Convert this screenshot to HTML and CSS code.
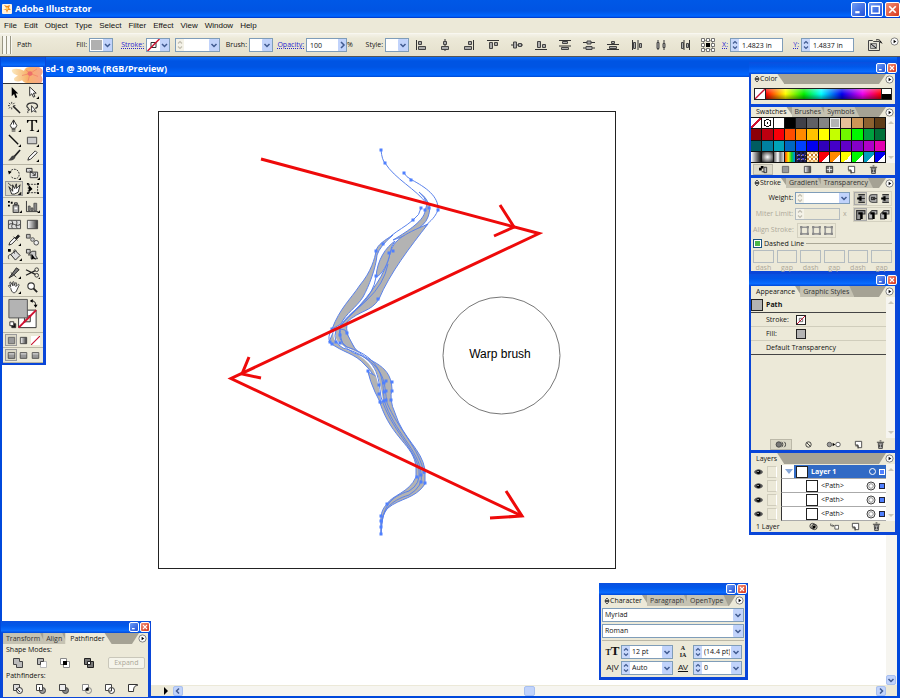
FILE: index.html
```
<!DOCTYPE html>
<html lang="en">
<head>
  <meta charset="UTF-8" />
  <meta name="viewport" content="width=device-width, initial-scale=1.0"/>
  <title>Adobe Illustrator</title>
  <link rel="stylesheet" href="styles.css">
</head>
<body>
  <!-- Icon sprites -->
  <svg class="sprites" aria-hidden="true">
    <defs>
      <linearGradient id="gFade"><stop offset="0" stop-color="#fff"/><stop offset="1" stop-color="#333"/></linearGradient>
      <symbol id="i-more" viewBox="0 0 10 10"><circle cx="5" cy="5" r="4" fill="#fff" stroke="#777"/><path d="M4 3l3 2-3 2z"/></symbol>
      <symbol id="i-updown" viewBox="0 0 6 8"><path d="M1 3.500L3 1l2 2.500zM1 4.500L3 7l2-2.500z" fill="#fff" stroke="#222" stroke-width=".8"/></symbol>
      <symbol id="i-min" viewBox="0 0 12 12"><path d="M3 8.500h4" stroke="#fff" stroke-width="2"/></symbol>
      <symbol id="i-max" viewBox="0 0 12 12"><path d="M2.500 3v6.500h7V3zM2 3h8" stroke="#fff" stroke-width="1.300" fill="none"/></symbol>
      <symbol id="i-close" viewBox="0 0 12 12"><path d="M3 3l6 6M9 3l-6 6" stroke="#fff" stroke-width="1.600"/></symbol>
      <symbol id="i-none" viewBox="0 0 12 12"><path d="M0 0h12v12H0z" fill="#fff"/><path d="M0 12L12 0" stroke="#c8102e" stroke-width="1.500"/></symbol>
      <symbol id="i-nostroke" viewBox="0 0 12 12"><path d="M0 0h12v12H0z" fill="#fff"/><path d="M3.500 3.500h5v5h-5z" fill="none" stroke="#333"/><path d="M0 12L12 0" stroke="#c8102e" stroke-width="1.500"/></symbol>

      <symbol id="a-left" viewBox="0 0 12 12"><path d="M1.500 1v10" class="k"/><path d="M3.500 2.500h3v3h-3zM3.500 7.500h7v3h-7z" class="b"/></symbol>
      <symbol id="a-hc" viewBox="0 0 12 12"><path d="M6 0v12" class="k"/><path d="M4.500 2.500h3v3h-3zM2.500 7.500h7v3h-7z" class="b"/></symbol>
      <symbol id="a-right" viewBox="0 0 12 12"><path d="M10.500 1v10" class="k"/><path d="M5.500 2.500h3v3h-3zM1.500 7.500h7v3h-7z" class="b"/></symbol>
      <symbol id="a-top" viewBox="0 0 12 12"><path d="M0 1.500h12" class="k"/><path d="M2.500 3.500h3v6h-3zM7.500 3.500h3v3h-3z" class="b"/></symbol>
      <symbol id="a-vc" viewBox="0 0 12 12"><path d="M0 6h12" class="k"/><path d="M2.500 3h3v6h-3zM7.500 4.500h3v3h-3z" class="b"/></symbol>
      <symbol id="a-bot" viewBox="0 0 12 12"><path d="M0 10.500h12" class="k"/><path d="M2.500 2.500h3v6h-3zM7.500 5.500h3v3h-3z" class="b"/></symbol>
      <symbol id="d-top" viewBox="0 0 12 12"><path d="M0 1.500h12M0 7h12" class="k"/><path d="M3.500 2.500h5v2h-5zM2.500 8.500h7v2h-7z" class="b"/></symbol>
      <symbol id="d-vc" viewBox="0 0 12 12"><path d="M0 3.500h12M0 9h12" class="k"/><path d="M4 2h4v3H4zM3 7.500h6v3H3z" class="b"/></symbol>
      <symbol id="d-bot" viewBox="0 0 12 12"><path d="M0 5.500h12M0 10.500h12" class="k"/><path d="M4.500 2.500h3v2h-3zM2.500 7.500h7v2h-7z" class="b"/></symbol>
      <symbol id="d-left" viewBox="0 0 12 12"><path d="M1.500 1v10M7 1v10" class="k"/><path d="M2.500 3.500h2v6h-2zM8.500 4.500h2v4h-2z" class="b"/></symbol>
      <symbol id="d-hc" viewBox="0 0 12 12"><path d="M3 1v10M9 1v10" class="k"/><path d="M2 3.500h2v6H2zM8 4.500h2v4H8z" class="b"/></symbol>
      <symbol id="d-right" viewBox="0 0 12 12"><path d="M5 1v10M10.500 1v10" class="k"/><path d="M2.500 3.500h2v6h-2zM7.500 4.500h2v4h-2z" class="b"/></symbol>
      <symbol id="i-ref" viewBox="0 0 14 14"><path d="M2.500 2.500h9v9h-9z" fill="none" stroke="#555" stroke-dasharray="1 1"/><g fill="#fff" stroke="#555" stroke-width=".8"><path d="M.5.500h3v3h-3zM5.500.500h3v3h-3zM10.500.500h3v3h-3zM.5 5.500h3v3h-3zM10.500 5.500h3v3h-3zM.5 10.500h3v3h-3zM5.500 10.500h3v3h-3zM10.500 10.500h3v3h-3z"/></g><path d="M5 5h4v4H5z"/></symbol>
      <symbol id="i-bridge" viewBox="0 0 16 14"><path d="M1.500 2.500h4l1 1h6v9h-11z" fill="#e8e6da" stroke="#444"/><path d="M3.500 5.500h6v5h-6z" fill="#bbb" stroke="#555" stroke-width=".8"/><path d="M4 6l5 4M14 5c0-3-3-4-5-3M13 3l2 2.500" fill="none" stroke="#111"/></symbol>

      <symbol id="t-select" viewBox="0 0 16 14"><path d="M5 1v10l2.500-2.300L9 13l2-.8-1.800-4H12z"/></symbol>
      <symbol id="t-direct" viewBox="0 0 16 14"><path d="M5 1v9.500l2.300-2.200L9 12l1.500-.7L9 7.700h3z" fill="#fff" stroke="#222"/><path d="M15 14v-3l-3 3z"/></symbol>
      <symbol id="t-wand" viewBox="0 0 16 14"><path d="M6.500 5.500L14 13" stroke="#222" stroke-width="1.600"/><path d="M5 1v2M5 7v2M1 5h2M7 5h2M2 2l1.500 1.500M8 2L6.500 3.500M2 8l1.500-1.500" class="k"/></symbol>
      <symbol id="t-lasso" viewBox="0 0 16 14"><path d="M4 8C0 6 2 2 8 2s7 5 3 6" class="k" stroke-width="1.300"/><path d="M7 5v7l1.800-1.600L12 12 9.500 8z" fill="#fff" stroke="#333"/><path d="M4 8c-2 1 0 3 1 1.500S2 10 3 13" class="k"/></symbol>
      <symbol id="t-pen" viewBox="0 0 16 14"><path d="M7 1l3.500 6L9 10H5L3.500 7zM7 1v5" fill="#fff" stroke="#222"/><path d="M5 11.500h4M5 13h4" class="k"/><path d="M15 14v-3l-3 3z"/></symbol>
      <symbol id="t-type" viewBox="0 0 16 14"><path d="M2 1h11v3h-1l-1-2H8.300v10l1.500.4v.6H5.200v-.6l1.500-.4V2H4L3 4H2z"/><path d="M15 14v-3l-3 3z"/></symbol>
      <symbol id="t-line" viewBox="0 0 16 14"><path d="M2 1l10 10" stroke="#111" stroke-width="1.500"/><path d="M15 14v-3l-3 3z"/></symbol>
      <symbol id="t-rect" viewBox="0 0 16 14"><path d="M2.500 3.500h10v7h-10z" fill="#ccc" stroke="#444"/><path d="M15 14v-3l-3 3z"/></symbol>
      <symbol id="t-brush" viewBox="0 0 16 14"><path d="M14 1L7 9" stroke="#222" stroke-width="1.800"/><path d="M7 7c-3 0-3 4-6 5 4 1 7 0 8-3z" fill="#444"/></symbol>
      <symbol id="t-pencil" viewBox="0 0 16 14"><path d="M3 12l1-3 7-7 2 2-7 7z" fill="#fff" stroke="#222"/><path d="M15 14v-3l-3 3z"/></symbol>
      <symbol id="t-rotate" viewBox="0 0 16 14"><path d="M3 6c1-5 9-5 10 1s-6 7-9 3" class="k" stroke-dasharray="2 1"/><path d="M1 4l1 4 3-3zM15 14v-3l-3 3z"/></symbol>
      <symbol id="t-scale" viewBox="0 0 16 14"><path d="M5.500 5.500h8v6h-8zM1.500 1.500h6v4h-6z" fill="#ddd" stroke="#333"/><path d="M5 4l6 5M11 6v3H8" class="k"/><path d="M16 14v-3l-3 3z"/></symbol>
      <symbol id="t-warp" viewBox="0 0 16 14"><path d="M2 5l4 5V3l2 4 2-5v5l4-4-2 8-4 2H5z" fill="#fff" stroke="#222"/><path d="M1 1c2 1 1 2 4 3M15 14v-3l-3 3z" stroke="#222" stroke-width=".7" fill="#111"/></symbol>
      <symbol id="t-free" viewBox="0 0 16 14"><path d="M3.500 2.500h10v9h-10z" fill="none" stroke="#333" stroke-dasharray="2 1"/><path d="M2 1h2v2H2zM13 1h2v2h-2zM13 11h2v2h-2zM2 11h2v2H2zM4 3v8l4-3.500z"/></symbol>
      <symbol id="t-spray" viewBox="0 0 16 14"><path d="M6.500 5.500h6v8h-6zM8 3h3v2H8z" fill="#aaa" stroke="#333"/><path d="M1 1h2v2H1zM4 2h2v2H4zM1 5h2v2H1zM16 14v-3l-3 3z"/><path d="M8 8h3v2H8z" fill="#fff"/></symbol>
      <symbol id="t-graph" viewBox="0 0 16 14"><path d="M1.500 1v11.500H14" class="k"/><path d="M3.500 6.500h2v5h-2zM6.500 8.500h2v3h-2zM9.500 3.500h3v8h-3z" fill="#888" stroke="#444" stroke-width=".8"/><path d="M16 14v-3l-3 3z"/></symbol>
      <symbol id="t-mesh" viewBox="0 0 16 14"><path d="M1.500 2.500h13v9h-13z" fill="#ddd" stroke="#444"/><path d="M2 7c4-3 8 3 12 0M5 3c3 4-2 5 1 8M10 3c2 3-2 5 1 8" class="k"/></symbol>
      <symbol id="t-grad" viewBox="0 0 16 14"><path d="M2.500 2.500h11v9h-11z" fill="url(#gFade)" stroke="#444"/></symbol>
      <symbol id="t-drop" viewBox="0 0 16 14"><path d="M2 13l1-3 5-5 2 2-5 5z" fill="#fff" stroke="#222"/><path d="M7 4l4 4M9 5l3-3 1.500 1.500-3 3z" fill="#222" stroke="#222"/><path d="M15 14v-3l-3 3z"/></symbol>
      <symbol id="t-blend" viewBox="0 0 16 14"><path d="M1.500 1.500h4v4h-4z" fill="#bbb" stroke="#444"/><circle cx="8" cy="7" r="2" fill="#ccc" stroke="#555"/><circle cx="12" cy="10.500" r="2.500" fill="#eee" stroke="#444"/></symbol>
      <symbol id="t-bucket" viewBox="0 0 16 14"><path d="M4 7l5-4 5 5-5 5z" fill="#ddd" stroke="#222"/><path d="M4 7c-3 0-3 3-2 5M8 6c-2-4 1-6 2-2" class="k"/><path d="M1 1h3v3H1zM16 14v-3l-3 3z"/></symbol>
      <symbol id="t-live" viewBox="0 0 16 14"><path d="M1.500 1.500h4v4h-4zM7.500 3.500h4v5l2 3h-7v-4h-3z" fill="#ccc" stroke="#333"/><path d="M7 6v7l2-2 3 2z"/></symbol>
      <symbol id="t-slice" viewBox="0 0 16 14"><path d="M2 13L10 2l3 2-6 6z" fill="#777" stroke="#222"/><path d="M4 7l6 5" class="k"/><path d="M15 14v-3l-3 3z"/></symbol>
      <symbol id="t-sciss" viewBox="0 0 16 14"><path d="M1 4l10 5M1 10l10-5" stroke="#222" stroke-width="1.300"/><circle cx="12.500" cy="4" r="2" class="k"/><circle cx="12.500" cy="10" r="2" class="k"/><path d="M16 14v-2l-2 2z"/></symbol>
      <symbol id="t-hand" viewBox="0 0 16 14"><path d="M4 8L2 6C1 5 2 4 3 5l1 1-1-4c0-1 1-1 1.500 0L6 5V1.500c0-1 1.500-1 1.500 0V5L9 2c.5-1 1.500 0 1 1L9.500 6l2-2c1-1 2 0 1 1.500L10 11c-2 3-5 2-6-3z" fill="#fff" stroke="#222" stroke-width=".9"/><path d="M15 14v-3l-3 3z"/></symbol>
      <symbol id="t-zoom" viewBox="0 0 16 14"><circle cx="6.500" cy="5.500" r="3.500" fill="#fff" stroke="#333" stroke-width="1.200"/><path d="M9 8l4 4" stroke="#222" stroke-width="2"/></symbol>
      <symbol id="i-screen" viewBox="0 0 11 10"><path d="M1.500 1.500h8v7h-8z" fill="#999" stroke="#444"/><path d="M2 3h7" stroke="#eee"/></symbol>

      <symbol id="f-new" viewBox="0 0 10 10"><path d="M1.500 1.500h7v7h-4v-3h-3z" fill="#fff" stroke="#444"/><path d="M1.500 6.500h3v3" class="k"/></symbol>
      <symbol id="f-trash" viewBox="0 0 10 10"><path d="M2.500 3.500h5l-.5 6h-4z" fill="#bbb" stroke="#444"/><path d="M1 2.500h8M4 1h2M4 5v3M6 5v3" class="k"/></symbol>
      <symbol id="f-lib" viewBox="0 0 10 10"><path d="M0 3h3v3H0zM2 1h3v3H2z"/><path d="M5.500 2.500h3v6h-3z" fill="#bbb" stroke="#333"/><path d="M3 7.500h3" class="k"/></symbol>
      <symbol id="f-sq" viewBox="0 0 10 10"><path d="M1.500 1.500h7v7h-7z" fill="#999" stroke="#666"/></symbol>
      <symbol id="f-grad" viewBox="0 0 10 10"><path d="M1.500 1.500h7v7h-7z" fill="url(#gFade)" stroke="#444"/></symbol>
      <symbol id="f-pat" viewBox="0 0 10 10"><path d="M1.500 1.500h7v7h-7z" fill="#777" stroke="#333"/><path d="M2 5h6M5 2v6" stroke="#eee"/></symbol>
      <symbol id="f-circles" viewBox="0 0 14 10"><circle cx="4" cy="5" r="3" fill="#777" stroke="#444"/><path d="M7 2c2 1 2 5 0 6M10 2c2 1 2 5 0 6" class="k"/></symbol>
      <symbol id="f-no" viewBox="0 0 10 10"><circle cx="5" cy="5" r="3" class="k"/><path d="M3 3l4 4" class="k"/></symbol>
      <symbol id="f-reduce" viewBox="0 0 16 10"><circle cx="3.500" cy="5" r="2.500" fill="#999" stroke="#555"/><circle cx="13" cy="5" r="2.500" fill="#fff" stroke="#555"/><path d="M7 3l3 2-3 2z"/></symbol>
      <symbol id="f-mask" viewBox="0 0 10 10"><circle cx="4" cy="4.500" r="3" class="k"/><circle cx="6" cy="5.500" r="3" class="k"/><path d="M4 4h3v3H4z"/></symbol>
      <symbol id="f-sub" viewBox="0 0 12 10"><path d="M6.500 3.500h5v5h-5z" fill="#fff" stroke="#333"/><path d="M1 1v3h4M3.500 2.500L5 4 3.500 5.500" class="k"/></symbol>
      <symbol id="i-eye" viewBox="0 0 10 8"><path d="M0 4c2-4 8-4 10 0-2 4-8 4-10 0z" fill="#555"/><circle cx="5" cy="4" r="2.200"/><circle cx="4.500" cy="3.400" r=".7" fill="#fff"/></symbol>
      <symbol id="i-target" viewBox="0 0 10 10"><circle cx="5" cy="5" r="4" fill="#fff" stroke="#444"/><circle cx="5" cy="5" r="2.300" fill="none" stroke="#777" stroke-width=".8"/></symbol>

      <symbol id="s-cap1" viewBox="0 0 10 10"><path d="M3 2h6v6H3z" fill="#999"/><path d="M3 1.500h6M3 8.500h6M5 5h4" class="k"/><path d="M4 3h2v4H4zM2 4h3v2H2z"/></symbol>
      <symbol id="s-cap2" viewBox="0 0 10 10"><path d="M9 1.500H5c-4 0-4 7 0 7h4z" fill="#bbb" stroke="#555"/><path d="M4 4h3v2H4zM5 5h4" class="k"/></symbol>
      <symbol id="s-join1" viewBox="0 0 10 10"><path d="M1.500 1.500H9v3H5v5H1.500z" fill="#999" stroke="#333"/><path d="M3 3h4v2H3zM5 5h2v4H5z"/></symbol>
      <symbol id="s-join2" viewBox="0 0 10 10"><path d="M1.500 9V4.500l3-3H9v3H5V9z" fill="#bbb" stroke="#444"/><path d="M3 3h4v2H3zM5 5h2v4H5z"/></symbol>
      <symbol id="s-align" viewBox="0 0 10 10"><path d="M2 2h6v6H2z" fill="none" stroke="#999" stroke-width="1.500"/><path d="M1 1h2v2H1zM7 1h2v2H7zM1 7h2v2H1zM7 7h2v2H7z" fill="#888"/></symbol>

      <symbol id="p-add" viewBox="0 0 12 12"><path d="M1.500 1.500h6v3h3v6h-6v-3h-3z" fill="#bbb" stroke="#444"/></symbol>
      <symbol id="p-sub" viewBox="0 0 12 12"><path d="M4.500 4.500h6v6h-6z" fill="#fff" stroke="#bbb"/><path d="M1.500 1.500h6v3h-3v3h-3z" fill="#bbb" stroke="#444"/></symbol>
      <symbol id="p-int" viewBox="0 0 12 12"><path d="M1.500 1.500h6v6h-6zM4.500 4.500h6v6h-6z" fill="#fff" stroke="#888"/><path d="M4 4h4v4H4z"/></symbol>
      <symbol id="p-exc" viewBox="0 0 12 12"><path d="M1.500 1.500h6v6h-6zM4.500 4.500h6v6h-6z" fill="#777" stroke="#222"/><path d="M5 5h2v2H5z" fill="#fff"/></symbol>
      <symbol id="p-div" viewBox="0 0 12 12"><path d="M1.500 1.500h6v6h-6z" fill="#ddd" stroke="#444"/><circle cx="7.500" cy="7.500" r="3" fill="#eee" stroke="#333"/><path d="M4 5l4 4" class="k"/></symbol>
      <symbol id="p-trim" viewBox="0 0 12 12"><circle cx="7.500" cy="7.500" r="3" fill="#999" stroke="#444"/><path d="M1.500 1.500h6v6h-6z" fill="#fff" stroke="#444"/><path d="M4.500 4v3.500" class="k"/></symbol>
      <symbol id="p-merge" viewBox="0 0 12 12"><circle cx="7.500" cy="7.500" r="3" fill="#888" stroke="#444"/><path d="M1.500 1.500h6v6h-6z" fill="#eee" stroke="#444"/></symbol>
      <symbol id="p-crop" viewBox="0 0 12 12"><path d="M1.500 1.500h6v6h-6z" fill="#fff" stroke="#888"/><circle cx="7.500" cy="7.500" r="3" fill="none" stroke="#888"/><path d="M4.500 7.500c0-2 1-3 3-3v3z"/></symbol>
      <symbol id="p-out" viewBox="0 0 12 12"><path d="M1.500 1.500h6v6h-6z" fill="#fff" stroke="#444"/><circle cx="7.500" cy="7.500" r="3" fill="#fff" stroke="#333"/><path d="M7.500 5v3H5" class="k"/></symbol>
      <symbol id="p-minus" viewBox="0 0 12 12"><path d="M1.500 1.500h9v1c-3 0-4 2-4 6h-5z" fill="#fff" stroke="#333"/></symbol>
    </defs>
  </svg>

  <div class="app">
    <header class="titlebar">
      <svg class="app-icon" viewBox="0 0 10 10"><rect width="10" height="10" rx="1" fill="#fff3dc"/><path d="M5 5L2 1l3 1 3-1-1 3 2 2-3 0-1 3-1-3-3-1z" fill="#f08a1c"/><circle cx="5" cy="4.500" r="1.300" fill="#ffd46b"/></svg>
      <h1>Adobe Illustrator</h1>
      <div class="win-buttons large">
        <button aria-label="Minimize"><svg><use href="#i-min"/></svg></button>
        <button aria-label="Maximize"><svg><use href="#i-max"/></svg></button>
        <button class="close" aria-label="Close"><svg><use href="#i-close"/></svg></button>
      </div>
    </header>

    <nav class="menubar">
      <a href="#">File</a>
      <a href="#">Edit</a>
      <a href="#">Object</a>
      <a href="#">Type</a>
      <a href="#">Select</a>
      <a href="#">Filter</a>
      <a href="#">Effect</a>
      <a href="#">View</a>
      <a href="#">Window</a>
      <a href="#">Help</a>
    </nav>

    <!-- Control palette -->
    <section class="control">
      <div class="grip"></div>
      <div class="c-path">Path</div>
      <div class="c-group c-fill"><span>Fill:</span><div class="combo"><span class="chip gray"></span><button class="drop" aria-label="Fill"></button></div></div>
      <div class="c-group c-stroke"><a href="#">Stroke:</a><div class="combo"><svg class="chip"><use href="#i-nostroke"/></svg><button class="drop" aria-label="Stroke"></button></div></div>
      <div class="c-group c-weight"><div class="spin off"></div><select aria-label="Stroke weight"><option></option></select></div>
      <div class="c-group c-brush"><label for="brush">Brush:</label><select id="brush"><option></option></select></div>
      <div class="c-group c-opacity"><a href="#">Opacity:</a><input type="text" value="100" aria-label="Opacity"><button class="drop right" aria-label="Opacity slider"></button><span>%</span></div>
      <div class="c-group c-style"><label for="gstyle">Style:</label><select id="gstyle"><option></option></select></div>
      <div class="aligns">
        <button aria-label="Align left"><svg><use href="#a-left"/></svg></button>
        <button aria-label="Align horizontal center"><svg><use href="#a-hc"/></svg></button>
        <button aria-label="Align right"><svg><use href="#a-right"/></svg></button>
        <button aria-label="Align top"><svg><use href="#a-top"/></svg></button>
        <button aria-label="Align vertical center"><svg><use href="#a-vc"/></svg></button>
        <button aria-label="Align bottom"><svg><use href="#a-bot"/></svg></button>
        <button aria-label="Distribute top"><svg><use href="#d-top"/></svg></button>
        <button aria-label="Distribute vertical center"><svg><use href="#d-vc"/></svg></button>
        <button aria-label="Distribute bottom"><svg><use href="#d-bot"/></svg></button>
        <button aria-label="Distribute left"><svg><use href="#d-left"/></svg></button>
        <button aria-label="Distribute horizontal center"><svg><use href="#d-hc"/></svg></button>
        <button aria-label="Distribute right"><svg><use href="#d-right"/></svg></button>
      </div>
      <svg class="ref"><use href="#i-ref"/></svg>
      <div class="c-group c-x"><label class="lnk" for="posx">X:</label><div class="spin"></div><input id="posx" type="text" value="1.4823 in"></div>
      <div class="c-group c-y"><label class="lnk" for="posy">Y:</label><div class="spin"></div><input id="posy" type="text" value="1.4837 in"></div>
      <button class="bridge" aria-label="Go to Bridge"><svg><use href="#i-bridge"/></svg></button>
      <button class="more" aria-label="Palette menu"><svg><use href="#i-more"/></svg></button>
    </section>

    <!-- Document window -->
    <main class="doc">
      <div class="doc-title">
        <h2>ed-1 @ 300% (RGB/Preview)</h2>
        <div class="win-buttons">
          <button aria-label="Minimize document"></button>
          <button aria-label="Maximize document"></button>
          <button class="close" aria-label="Close document"></button>
        </div>
      </div>
      <div class="doc-body">
        <div class="canvas">
          <svg class="artboard" viewBox="158 111 458 458">
            <rect x="158.500" y="111.500" width="457" height="457" fill="#fff" stroke="#222"/>
            <!-- ribbons -->
            <g fill="#b3b3b3" stroke="#5a82ec" stroke-width="1">
              <path d="M419 192Q425 197 427 204L425 211C424 220 410 230 393 240C405 236 424 229 428 217Q431 208 429 204Q426 197 419 192z"/>
              <path d="M428 224C402 235 394 240 390 253C388 266 378 285 360 305Q348 316 339 328L341 343L354 347Q345 336 347 322C360 310 371 312 379 299C390 273 410 247 428 224z"/>
              <path d="M395 241C386 247 377 260 376 277C382 275 388 264 390 253Q391 246 395 241z"/>
              <path d="M393 235C385 240 377 245 376 251C375 258 371 272 360 285C350 300 340 308 332 329L341 324C346 313 356 308 363 297C369 286 376 268 377 255Q380 246 393 235z"/>
              <path d="M329 342C343 353 355 353 365 365Q374 373 380 388V403C392 439 414 445 416 467V477C409 493 392 495 387 504C379 512 381 520 381 534C382 519 383 513 388 508C400 498 415 499 425 484V470C422 449 403 439 395 413Q389 400 392 389C391 361 365 363 354 347L345 330L335 328z"/>
              <path d="M368 372Q370 381 375 392L381 404Q380 384 376 376z"/>
            </g>
            <path d="M335 330Q331 343 350 350C379 361 379 383 382 401" fill="none" stroke="#fff" stroke-width="2"/>
            <g fill="none" stroke="#5a82ec" stroke-width="1">
              <path d="M381 150Q382 160 385 163C395 179 416 189 427 204"/>
              <path d="M404 173Q406 177 412 180C425 187 439 196 438 210C434 220 428 222 425 227"/>
              <path d="M421 208Q420 215 413 220C405 227 398 230 391 236"/>
              <path d="M332 329Q327 337 330 342"/>
              <path d="M336 330Q332 342 343 348C379 358 378 376 381 397C391 430 415 448 419 470Q421 484 409 491C390 497 382 506 381 534"/>
              <path d="M340 328Q337 340 347 347C383 358 383 380 384 400C394 432 419 450 421 473Q424 486 409 495C389 501 383 511 381 525"/>
              <path d="M376 277Q374 292 360 306C340 322 339 327 341 338Q342 350 362 356C387 371 384 385 387 403C398 429 420 449 424 474"/>
              <path d="M388 264Q384 284 367 300Q345 320 336 330"/>
            </g>
            <g fill="#4f80ff" id="anchors"></g>
            <!-- warp strokes -->
            <g fill="none" stroke="#ee0a0a" stroke-width="3">
              <path d="M261 159L539 233.500L231 378.500L522 516"/>
              <path d="M500 205L514 227L494 236"/>
              <path d="M249 357L242 374L261 378"/>
              <path d="M506 491L522 516L490 518"/>
            </g>
            <circle cx="501.500" cy="355.500" r="58.500" fill="none" stroke="#777"/>
            <text x="500" y="358" text-anchor="middle" class="warp-label">Warp brush</text>
          </svg>
        </div>
        <div class="vscroll"><button class="sb down" aria-label="Scroll down"></button></div>
      </div>
      <div class="statusbar">
        <span class="status-arrow"></span>
        <button class="sb left" aria-label="Scroll left"></button>
        <div class="track"><div class="thumb"></div></div>
        <button class="sb next" aria-label="Scroll right"></button>
      </div>
    </main>
  </div>

  <!-- Toolbox -->
  <aside class="window toolbox">
    <div class="win-title"></div>
    <svg class="flower" viewBox="0 0 40 17" preserveAspectRatio="none">
      <defs><linearGradient id="gFlower"><stop offset="0" stop-color="#fbe9c0"/><stop offset=".5" stop-color="#f7b26a"/><stop offset="1" stop-color="#f7a58c"/></linearGradient></defs>
      <path d="M0 0h40v17H0z" fill="#fff"/>
      <path d="M9 3c3-2 8-1 12 1 1-3 3-4 6-4h9c4 2 5 5 2 9 2 3 2 6 0 8H24c-3 0-4-2-5-3-3 2-8 2-8-1 0-2 3-3 4-4-3-1-7-3-6-6z" fill="url(#gFlower)"/>
      <path d="M27 7l-4-4M27 7l7-5M27 7l8 3M27 7l-2 8M27 7l-8 2" stroke="#f2806a" stroke-width=".8"/>
      <circle cx="27" cy="7" r="2.500" fill="#ee6f6a"/>
    </svg>
    <div class="tools">
      <button aria-label="Selection"><svg><use href="#t-select"/></svg></button>
      <button aria-label="Direct Selection"><svg><use href="#t-direct"/></svg></button>
      <button aria-label="Magic Wand"><svg><use href="#t-wand"/></svg></button>
      <button aria-label="Lasso"><svg><use href="#t-lasso"/></svg></button>
    </div>
    <div class="tools">
      <button aria-label="Pen"><svg><use href="#t-pen"/></svg></button>
      <button aria-label="Type"><svg><use href="#t-type"/></svg></button>
      <button aria-label="Line"><svg><use href="#t-line"/></svg></button>
      <button aria-label="Rectangle"><svg><use href="#t-rect"/></svg></button>
      <button aria-label="Paintbrush"><svg><use href="#t-brush"/></svg></button>
      <button aria-label="Pencil"><svg><use href="#t-pencil"/></svg></button>
    </div>
    <div class="tools">
      <button aria-label="Rotate"><svg><use href="#t-rotate"/></svg></button>
      <button aria-label="Scale"><svg><use href="#t-scale"/></svg></button>
      <button class="active" aria-label="Warp"><svg><use href="#t-warp"/></svg></button>
      <button aria-label="Free Transform"><svg><use href="#t-free"/></svg></button>
    </div>
    <div class="tools">
      <button aria-label="Symbol Sprayer"><svg><use href="#t-spray"/></svg></button>
      <button aria-label="Graph"><svg><use href="#t-graph"/></svg></button>
    </div>
    <div class="tools">
      <button aria-label="Mesh"><svg><use href="#t-mesh"/></svg></button>
      <button aria-label="Gradient"><svg><use href="#t-grad"/></svg></button>
      <button aria-label="Eyedropper"><svg><use href="#t-drop"/></svg></button>
      <button aria-label="Blend"><svg><use href="#t-blend"/></svg></button>
      <button aria-label="Live Paint Bucket"><svg><use href="#t-bucket"/></svg></button>
      <button aria-label="Live Paint Selection"><svg><use href="#t-live"/></svg></button>
    </div>
    <div class="tools">
      <button aria-label="Slice"><svg><use href="#t-slice"/></svg></button>
      <button aria-label="Scissors"><svg><use href="#t-sciss"/></svg></button>
      <button aria-label="Hand"><svg><use href="#t-hand"/></svg></button>
      <button aria-label="Zoom"><svg><use href="#t-zoom"/></svg></button>
    </div>
    <div class="fillstroke">
      <svg viewBox="0 0 39 36">
        <path d="M15.500 13.500h18v18h-18z" fill="#fff" stroke="#333"/>
        <path d="M15.500 31.500l18-18" stroke="#d01030" stroke-width="2"/>
        <path d="M21.500 19.500h6v6h-6z" fill="#ece9d8" stroke="#333"/>
        <path d="M21 26l7-7" stroke="#d01030" stroke-width="2"/>
        <path d="M5.500 2.500h19v19h-19z" fill="#b3b3b3" stroke="#555"/>
        <path d="M29 4c4 0 4 3 4 5" fill="none" stroke="#111"/><path d="M27 4l3-2v4zM31 8h4l-2 3z"/>
        <path d="M8.500 27.500h4v4h-4z" fill="#111" stroke="#333"/><path d="M6.500 25.500h4v4h-4z" fill="#fff" stroke="#333"/>
      </svg>
    </div>
    <div class="modes">
      <button class="active" aria-label="Color"><svg><use href="#f-sq"/></svg></button>
      <button aria-label="Gradient fill"><svg><use href="#f-grad"/></svg></button>
      <button aria-label="None"><svg><use href="#i-none"/></svg></button>
    </div>
    <div class="modes">
      <button class="active" aria-label="Standard screen"><svg><use href="#i-screen"/></svg></button>
      <button aria-label="Full screen with menu"><svg><use href="#i-screen"/></svg></button>
      <button aria-label="Full screen"><svg><use href="#i-screen"/></svg></button>
    </div>
  </aside>

  <!-- Right dock -->
  <aside class="dock">
    <section class="window">
      <div class="win-title"><div class="win-buttons"><button aria-label="Minimize"><svg><use href="#i-min"/></svg></button><button class="close" aria-label="Close"><svg><use href="#i-close"/></svg></button></div></div>
      <div class="tabs"><button class="tab on"><svg><use href="#i-updown"/></svg>Color</button><button class="more" aria-label="Color menu"><svg><use href="#i-more"/></svg></button></div>
      <div class="color-body"><svg class="no-color"><use href="#i-none"/></svg><div class="ramp"></div><div class="bw"></div></div>
      <div class="split"></div>
      <div class="tabs"><button class="tab on">Swatches</button><button class="tab">Brushes</button><button class="tab">Symbols</button><button class="more" aria-label="Swatches menu"><svg><use href="#i-more"/></svg></button></div>
      <div class="swatch-body"><div class="swatches" id="swatches"></div><div class="mini-scroll"></div></div>
      <div class="foot swatch-foot">
        <button class="active" aria-label="Show all"><svg><use href="#f-lib"/></svg></button>
        <button aria-label="Show colors"><svg><use href="#f-sq"/></svg></button>
        <button aria-label="Show gradients"><svg><use href="#f-grad"/></svg></button>
        <button aria-label="Show patterns"><svg><use href="#f-pat"/></svg></button>
        <button aria-label="New swatch"><svg><use href="#f-new"/></svg></button>
        <button aria-label="Delete swatch"><svg><use href="#f-trash"/></svg></button>
      </div>
      <div class="split"></div>
      <div class="tabs"><button class="tab on"><svg><use href="#i-updown"/></svg>Stroke</button><button class="tab">Gradient</button><button class="tab">Transparency</button><button class="more" aria-label="Stroke menu"><svg><use href="#i-more"/></svg></button></div>
      <div class="stroke-body">
        <div class="s-row">
          <label for="weight">Weight:</label><div class="spin off"></div><select id="weight"><option></option></select>
          <div class="caps"><svg class="active"><use href="#s-cap1"/></svg><svg><use href="#s-cap2"/></svg><svg><use href="#s-cap1"/></svg></div>
        </div>
        <div class="s-row off">
          <label for="miter">Miter Limit:</label><div class="spin off"></div><input id="miter" type="text" disabled><span>x</span>
          <div class="caps"><svg class="active"><use href="#s-join1"/></svg><svg><use href="#s-join2"/></svg><svg><use href="#s-join2"/></svg></div>
        </div>
        <div class="s-row off">
          <span class="lab">Align Stroke:</span>
          <div class="caps near"><svg><use href="#s-align"/></svg><svg><use href="#s-align"/></svg><svg><use href="#s-align"/></svg></div>
        </div>
        <div class="dashed"><input type="checkbox" id="dashed"><label for="dashed">Dashed Line</label><hr></div>
        <div class="dashes">
          <label><input type="text" disabled>dash</label>
          <label><input type="text" disabled>gap</label>
          <label><input type="text" disabled>dash</label>
          <label><input type="text" disabled>gap</label>
          <label><input type="text" disabled>dash</label>
          <label><input type="text" disabled>gap</label>
        </div>
      </div>
    </section>

    <section class="window">
      <div class="win-title"><div class="win-buttons"><button aria-label="Minimize"><svg><use href="#i-min"/></svg></button><button class="close" aria-label="Close"><svg><use href="#i-close"/></svg></button></div></div>
      <div class="tabs tall"><button class="tab on">Appearance</button><button class="tab">Graphic Styles</button><button class="more" aria-label="Appearance menu"><svg><use href="#i-more"/></svg></button></div>
      <div class="appear-body">
        <div class="appear-list">
          <div class="ap-row head"><span class="ap-chip big"></span><b>Path</b></div>
          <div class="ap-row"><span class="ap-name">Stroke:</span><svg class="ap-chip"><use href="#i-nostroke"/></svg></div>
          <div class="ap-row"><span class="ap-name">Fill:</span><span class="ap-chip"></span></div>
          <div class="ap-row last"><span>Default Transparency</span></div>
        </div>
        <div class="mini-scroll"></div>
      </div>
      <div class="foot appear-foot">
        <button class="active" aria-label="New art has basic appearance"><svg class="wide"><use href="#f-circles"/></svg></button>
        <button aria-label="Clear appearance"><svg><use href="#f-no"/></svg></button>
        <button aria-label="Reduce to basic"><svg class="wide"><use href="#f-reduce"/></svg></button>
        <button aria-label="Duplicate item"><svg><use href="#f-new"/></svg></button>
        <button aria-label="Delete item"><svg><use href="#f-trash"/></svg></button>
      </div>
      <div class="split"></div>
      <div class="tabs tall"><button class="tab on">Layers</button><button class="more" aria-label="Layers menu"><svg><use href="#i-more"/></svg></button></div>
      <div class="layers-body">
        <div class="layers">
          <div class="layer top"><svg class="eye"><use href="#i-eye"/></svg><i></i><div class="l-main"><span class="twirl"></span><span class="thumbnail"></span><span class="l-name">Layer 1</span><span class="ring"></span><span class="sel"></span></div></div>
          <div class="layer"><svg class="eye"><use href="#i-eye"/></svg><i></i><div class="l-main"><span class="thumbnail"></span><span class="l-name">&lt;Path&gt;</span><svg class="target"><use href="#i-target"/></svg><span class="sel"></span></div></div>
          <div class="layer"><svg class="eye"><use href="#i-eye"/></svg><i></i><div class="l-main"><span class="thumbnail"></span><span class="l-name">&lt;Path&gt;</span><svg class="target"><use href="#i-target"/></svg><span class="sel"></span></div></div>
          <div class="layer"><svg class="eye"><use href="#i-eye"/></svg><i></i><div class="l-main"><span class="thumbnail"></span><span class="l-name">&lt;Path&gt;</span><svg class="target"><use href="#i-target"/></svg><span class="sel"></span></div></div>
        </div>
        <div class="mini-scroll"></div>
      </div>
      <div class="foot layer-foot">
        <span>1 Layer</span>
        <button aria-label="Clipping mask"><svg><use href="#f-mask"/></svg></button>
        <button aria-label="New sublayer"><svg><use href="#f-sub"/></svg></button>
        <button aria-label="New layer"><svg><use href="#f-new"/></svg></button>
        <button aria-label="Delete layer"><svg><use href="#f-trash"/></svg></button>
      </div>
    </section>
  </aside>

  <!-- Character -->
  <section class="window character">
    <div class="win-title"><div class="win-buttons"><button aria-label="Minimize"><svg><use href="#i-min"/></svg></button><button class="close" aria-label="Close"><svg><use href="#i-close"/></svg></button></div></div>
    <div class="tabs tall"><button class="tab on"><svg><use href="#i-updown"/></svg>Character</button><button class="tab">Paragraph</button><button class="tab">OpenType</button><button class="more" aria-label="Character menu"><svg><use href="#i-more"/></svg></button></div>
    <div class="char-body">
      <select aria-label="Font family"><option>Myriad</option></select>
      <select aria-label="Font style"><option>Roman</option></select>
      <div class="char-grid">
        <label for="fsize" class="glyph"><small>T</small>T</label><div class="spin"></div><select id="fsize"><option>12 pt</option></select>
        <label for="lead" class="glyph stack"><span>A</span><span>IA</span></label><div class="spin"></div><select id="lead"><option>(14.4 pt)</option></select>
        <label for="kern" class="glyph sans">A|V</label><div class="spin"></div><select id="kern"><option>Auto</option></select>
        <label for="tracking" class="glyph sans under">AV</label><div class="spin"></div><select id="tracking"><option>0</option></select>
      </div>
    </div>
  </section>

  <!-- Pathfinder -->
  <section class="window pathfinder">
    <div class="win-title"><div class="win-buttons"><button aria-label="Minimize"><svg><use href="#i-min"/></svg></button><button class="close" aria-label="Close"><svg><use href="#i-close"/></svg></button></div></div>
    <div class="tabs tall"><button class="tab">Transform</button><button class="tab">Align</button><button class="tab on">Pathfinder</button><button class="more" aria-label="Pathfinder menu"><svg><use href="#i-more"/></svg></button></div>
    <div class="pf-body">
      <p>Shape Modes:</p>
      <div class="pf-row">
        <button aria-label="Add"><svg><use href="#p-add"/></svg></button>
        <button aria-label="Subtract"><svg><use href="#p-sub"/></svg></button>
        <button aria-label="Intersect"><svg><use href="#p-int"/></svg></button>
        <button aria-label="Exclude"><svg><use href="#p-exc"/></svg></button>
        <button class="expand" disabled>Expand</button>
      </div>
      <p>Pathfinders:</p>
      <div class="pf-row">
        <button aria-label="Divide"><svg><use href="#p-div"/></svg></button>
        <button aria-label="Trim"><svg><use href="#p-trim"/></svg></button>
        <button aria-label="Merge"><svg><use href="#p-merge"/></svg></button>
        <button aria-label="Crop"><svg><use href="#p-crop"/></svg></button>
        <button aria-label="Outline"><svg><use href="#p-out"/></svg></button>
        <button aria-label="Minus back"><svg><use href="#p-minus"/></svg></button>
      </div>
    </div>
  </section>

  <script>
    const colors = [
      'none', 'reg', '#fff', '#000', '#404048', '#606064', '#848484', 'picked', '#e6bf98', '#cc9557', '#8c6130', '#5d3c17',
      '#8c0008', '#bd0010', '#f80008', '#ff4c00', '#ff8a00', '#ffc200', '#ffff00', '#c4ff00', '#70f800', '#00f800', '#00a040', '#007038',
      '#005c60', '#0080a0', '#00a4b8', '#0068c0', '#0040ff', '#0000f0', '#3000b8', '#4400c8', '#6000c8', '#8400c8', '#b000c8', '#e400b0',
      'g-lin', 'g-rad', 'g-steel', 'g-rain', 'p-blue', 'p-sand', '#f80008 cut', '#ff8a00 cut', '#ffff00 cut', '#00f800 cut', '#00a0c0 cut', '#0000f0 cut'
    ];
    const box = document.getElementById('swatches');
    colors.forEach(c => {
      const el = document.createElement('span');
      const [name, extra] = c.split(' ');
      if (name[0] === '#') el.style.backgroundColor = name;
      else el.className = 'sw-' + name;
      if (extra) el.classList.add(extra);
      box.appendChild(el);
    });

    // anchor points of the selected paths
    const points = [
      [381, 150], [385, 163], [404, 173], [411, 180], [421, 208], [425, 210], [429, 208], [438, 210], [413, 220],
      [383, 244], [376, 251], [389, 253], [393, 251], [376, 276], [378, 299], [332, 329], [340, 335], [347, 333],
      [330, 342], [332, 344], [336, 342], [340, 343], [368, 371], [379, 385], [384, 383], [386, 381], [392, 382],
      [379, 394], [384, 392], [386, 391], [392, 391], [380, 402], [384, 401], [386, 400], [391, 400],
      [417, 477], [421, 475], [424, 472], [421, 482], [425, 483], [387, 504], [381, 516], [381, 521], [381, 527], [381, 534]
    ];
    document.getElementById('anchors').innerHTML =
      points.map(p => `<rect x="${p[0] - 1.5}" y="${p[1] - 1.5}" width="3" height="3"/>`).join('');
  </script>
</body>
</html>
```
FILE: styles.css
```
:root {
  --face: #ece9d8;
  --blue: #0a46d8;
  --field: #7f9db9;
  --dim: #aca899;
}

* {
  box-sizing: border-box;
}

body {
  margin: 0;
  height: 100vh;
  position: relative;
  overflow: hidden;
  font-family: "Open Sans", "Noto Sans", sans-serif;
  font-size: 7px;
  line-height: 10px;
  color: #111;
  background: #fff;
}

button, input, select {
  font: inherit;
  color: inherit;
  margin: 0;
  padding: 0;
  border: 0;
  border-radius: 0;
  background: none;
}

button {
  display: flex;
  align-items: center;
  justify-content: center;
}

svg {
  display: block;
  width: 12px;
  height: 12px;
}

.sprites {
  position: absolute;
  width: 0;
  height: 0;
}

.k {
  fill: none;
  stroke: #333;
}

.b {
  fill: #aaa;
  stroke: #444;
}

h1, h2, p {
  margin: 0;
}

/* Application frame */
.app {
  height: 100%;
  display: flex;
  flex-direction: column;
}

.titlebar {
  height: 18px;
  display: flex;
  align-items: center;
  padding: 0 0 0 2px;
  color: #fff;
  background: linear-gradient(#0058e6, #0054e3 60%, #0066ff 90%, #0030c0);
}

.app-icon {
  width: 10px;
  height: 10px;
  margin-right: 3px;
}

.titlebar h1 {
  flex: 1;
  font-size: 9px;
  font-weight: bold;
}

.win-buttons {
  display: flex;
  gap: 1px;
}

.win-buttons button {
  width: 10px;
  height: 10px;
  border: 1px solid #fff;
  border-radius: 2px;
  background: linear-gradient(135deg, #6f9df5, #1f4fd8);
}

.win-buttons .close {
  background: linear-gradient(135deg, #f09078, #d8351a);
}

.win-buttons svg {
  width: 8px;
  height: 8px;
}

.large {
  gap: 2px;
}

.large button {
  width: 15px;
  height: 15px;
}

.large svg {
  width: 13px;
  height: 13px;
}

.menubar {
  height: 15px;
  display: flex;
  align-items: center;
  gap: 7px;
  padding-left: 4px;
  font-family: "Liberation Sans", Arial, sans-serif;
  font-size: 8px;
  background: var(--face);
}

.menubar a {
  color: #111;
  text-decoration: none;
}

.control {
  height: 24px;
  display: flex;
  align-items: center;
  background: linear-gradient(#f4f2e8, var(--face) 20%, #e4e0cc);
  border-top: 1px solid #f8f7f0;
  border-bottom: 1px solid #555;
}

.grip {
  width: 10px;
  height: 18px;
  margin: 0 5px 0 2px;
  background: repeating-linear-gradient(90deg, #999684 0 1px, #f8f7f0 1px 4px);
}

.c-path {
  width: 53px;
}

.c-group {
  display: flex;
  align-items: center;
  justify-content: flex-end;
}

.c-group > a,
.c-group > label,
.c-group > span {
  margin-right: 2px;
}

.c-group > a,
.lnk {
  color: #2a28d0;
  text-decoration: underline dotted;
}

.c-fill { width: 43px; }
.c-stroke { width: 57px; }
.c-weight { width: 50px; }
.c-brush { width: 53px; }
.c-opacity { width: 85px; }
.c-style { width: 51px; }
.c-x { width: 65px; }
.c-y { width: 71px; }

.combo {
  display: flex;
  border: 1px solid var(--field);
  background: #fff;
}

.chip {
  width: 13px;
  height: 12px;
}

.gray {
  background: #b0b0b0;
  border: 1px solid #fff;
}

select {
  appearance: none;
  border: 1px solid var(--field);
  padding: 0 11px 0 2px;
  background: #fff url("data:image/svg+xml,%3Csvg xmlns='http://www.w3.org/2000/svg' width='10' height='12'%3E%3Crect width='10' height='12' rx='1' fill='%23c1d3fb'/%3E%3Cpath d='M2.500 5l2.500 2.500L7.500 5' fill='none' stroke='%23405a90' stroke-width='1.500'/%3E%3C/svg%3E") no-repeat right center;
}

.drop {
  width: 9px;
  height: 12px;
  background: #c1d3fb url("data:image/svg+xml,%3Csvg xmlns='http://www.w3.org/2000/svg' width='9' height='12'%3E%3Cpath d='M2 5l2.500 2.500L7 5' fill='none' stroke='%23405a90' stroke-width='1.500'/%3E%3C/svg%3E") no-repeat center;
}

.drop.right {
  height: 14px;
  border: 1px solid var(--field);
  border-left: 0;
  background: #c1d3fb url("data:image/svg+xml,%3Csvg xmlns='http://www.w3.org/2000/svg' width='8' height='12'%3E%3Cpath d='M3 3l3 3-3 3' fill='none' stroke='%23405a90' stroke-width='1.500'/%3E%3C/svg%3E") no-repeat center;
}

.control select,
.control input {
  height: 14px;
}

.c-weight select { width: 36px; }
.c-brush select { width: 24px; }
.c-style select { width: 24px; }

.control input {
  border: 1px solid var(--field);
  background: #fff;
  padding-left: 3px;
}

.c-opacity input {
  width: 32px;
  border-right: 0;
}

.c-opacity > span {
  width: 9px;
}

.c-x input,
.c-y input {
  width: 44px;
  border-left: 0;
}

.spin {
  width: 9px;
  height: 14px;
  border: 1px solid var(--field);
  border-right: 0;
  background: #c8d8fb url("data:image/svg+xml,%3Csvg xmlns='http://www.w3.org/2000/svg' width='8' height='12'%3E%3Cpath d='M2 4.500L4 2.500l2 2M2 7.500l2 2 2-2' fill='none' stroke='%23405a90' stroke-width='1.200'/%3E%3C/svg%3E") no-repeat center;
}

.spin.off {
  background-color: #f4f2e8;
  background-image: url("data:image/svg+xml,%3Csvg xmlns='http://www.w3.org/2000/svg' width='8' height='12'%3E%3Cpath d='M2 4.500L4 2.500l2 2M2 7.500l2 2 2-2' fill='none' stroke='%23c0bdb0' stroke-width='1.200'/%3E%3C/svg%3E");
}

.spin.off + select {
  border-left: 0;
}

.aligns {
  display: flex;
}

.aligns button {
  width: 24px;
}

.ref {
  width: 14px;
  height: 14px;
  margin: 0 3px 0 4px;
}

.bridge {
  margin-left: 13px;
}

.bridge svg {
  width: 16px;
  height: 14px;
}

.more svg {
  width: 9px;
  height: 9px;
}

.control .more {
  margin: 0 1px 8px auto;
}

/* Document window */
.doc {
  flex: 1;
  min-height: 0;
  display: flex;
  flex-direction: column;
  border: solid #0048dc;
  border-width: 0 3px 2px 2px;
  background: #fff;
}

.doc-title {
  height: 20px;
  display: flex;
  align-items: center;
  padding: 3px 2px 0 43px;
  color: #fff;
  background: linear-gradient(#0a6cf8, #0054e3 20%, #0054e3 50%, #0066ff 90%, #0048d0);
}

.doc-title h2 {
  flex: 1;
  font-size: 9px;
  font-weight: bold;
}

.doc-title button {
  width: 14px;
  height: 14px;
}

.doc-body {
  flex: 1;
  min-height: 0;
  display: flex;
}

.canvas {
  flex: 1;
  padding: 34px 0 0 156px;
  overflow: hidden;
}

.artboard {
  width: 458px;
  height: 458px;
}

.warp-label {
  font-family: "Liberation Sans", Arial, sans-serif;
  font-size: 12px;
}

.vscroll {
  width: 11px;
  display: flex;
  flex-direction: column;
  justify-content: flex-end;
  background: #f6f5f0;
}

.sb {
  width: 10px;
  height: 10px;
  border: 1px solid #a8c0f0;
  border-radius: 2px;
  background: #c1d3fb center no-repeat;
}

.down { background-image: url("data:image/svg+xml,%3Csvg xmlns='http://www.w3.org/2000/svg' width='8' height='8'%3E%3Cpath d='M1.500 3L4 5.500 6.500 3' fill='none' stroke='%23405a90' stroke-width='1.500'/%3E%3C/svg%3E"); }
.left { background-image: url("data:image/svg+xml,%3Csvg xmlns='http://www.w3.org/2000/svg' width='8' height='8'%3E%3Cpath d='M5 1.500L2.500 4 5 6.500' fill='none' stroke='%23405a90' stroke-width='1.500'/%3E%3C/svg%3E"); }
.next { background-image: url("data:image/svg+xml,%3Csvg xmlns='http://www.w3.org/2000/svg' width='8' height='8'%3E%3Cpath d='M3 1.500L5.500 4 3 6.500' fill='none' stroke='%23405a90' stroke-width='1.500'/%3E%3C/svg%3E"); }

.statusbar {
  height: 11px;
  display: flex;
  align-items: center;
  padding: 0 11px 0 162px;
  background: var(--face);
}

.status-arrow {
  border: solid transparent;
  border-width: 4px 0 4px 4px;
  border-left-color: #000;
  margin-right: 5px;
}

.track {
  flex: 1;
  height: 10px;
  display: flex;
  justify-content: center;
  background: #f6f5f0;
}

.thumb {
  width: 11px;
  border: 1px solid #a8c0f0;
  border-radius: 2px;
  background: #c1d3fb;
}

/* Floating windows */
.window {
  border: solid var(--blue);
  border-width: 0 3px 3px 2px;
  background: var(--face);
}

.win-title {
  height: 12px;
  display: flex;
  align-items: center;
  justify-content: flex-end;
  margin: 0 -2px;
  background: linear-gradient(#0a50e0, #0058ea 40%, #0a6cff 80%, #0048d8);
}

.tabs {
  height: 10px;
  display: flex;
  align-items: stretch;
  background: #a5a294;
}

.tall {
  height: 11px;
}

.tab {
  flex: none;
  padding: 0 5px 0 3px;
  margin-right: -2px;
  color: #333;
  background: #c5c2b2;
  clip-path: polygon(0 0, calc(100% - 5px) 0, 100% 100%, 0 100%);
}

.tab.on {
  color: #111;
  padding: 0 7px 0 5px;
  background: var(--face);
  clip-path: polygon(0 0, calc(100% - 7px) 0, 100% 100%, 0 100%);
}

.tab svg {
  width: 6px;
  height: 8px;
}

.tab.on:has(svg) {
  padding-left: 3px;
}

.tabs .more {
  width: 16px;
  margin-left: auto;
  padding-left: 5px;
  background: var(--face);
  clip-path: polygon(7px 0, 100% 0, 100% 100%, 0 100%);
}

.split {
  height: 3px;
  margin: 0 -1px;
  background: var(--blue);
}

.mini-scroll {
  width: 9px;
  display: flex;
  flex-direction: column;
  justify-content: space-between;
  align-items: center;
  padding: 4px 0;
  background: #f6f5f0;
}

.mini-scroll::before,
.mini-scroll::after {
  content: "";
  border: solid transparent;
  border-width: 0 3px 3px;
  border-bottom-color: #c9c7ba;
}

.mini-scroll::after {
  border-width: 3px 3px 0;
  border-top-color: #c9c7ba;
}

.foot {
  height: 12px;
  display: flex;
  align-items: center;
  background: var(--face);
}

.foot svg {
  width: 9px;
  height: 9px;
}

.foot .wide {
  width: 15px;
}

.foot .active {
  background: #dcd9c8;
  outline: 1px solid #bbb8a8;
}

/* Toolbox */
.toolbox {
  position: absolute;
  left: 1px;
  top: 57px;
  width: 45px;
  border-width: 0 3px 2px 2px;
}

.toolbox .win-title {
  height: 10px;
}

.flower {
  width: 100%;
  height: 17px;
  border-bottom: 1px solid #333;
}

.tools {
  display: grid;
  grid-template-columns: 18px 18px;
  grid-auto-rows: 15px;
  justify-content: center;
  padding: 1px 0;
  border-bottom: 1px solid #b8b5a4;
}

.tools svg {
  width: 15px;
  height: 13px;
}

.tools .active,
.modes .active {
  background: #dcd9c8;
  outline: 1px solid #999;
  outline-offset: -1px;
}

.fillstroke {
  border-bottom: 1px solid #b8b5a4;
}

.fillstroke svg {
  width: 39px;
  height: 35px;
}

.modes {
  height: 15px;
  display: flex;
  align-items: center;
  justify-content: center;
  border-bottom: 1px solid #b8b5a4;
}

.modes button {
  width: 12px;
  height: 12px;
}

.modes svg {
  width: 9px;
  height: 9px;
}

/* Dock */
.dock {
  position: absolute;
  right: 2px;
  top: 62px;
  width: 149px;
}

.color-body {
  height: 20px;
  display: flex;
  align-items: center;
  padding: 0 3px;
}

.no-color,
.ramp,
.bw {
  height: 12px;
  border: 1px solid #222;
}

.no-color {
  width: 12px;
}

.ramp {
  flex: 1;
  border-width: 1px 0;
  background: linear-gradient(rgba(255,255,255,.3), transparent 50%, rgba(0,0,0,.4)),
    linear-gradient(90deg, #f00, #ff0 17%, #0e0 33%, #0ff 48%, #00e 66%, #e0e 84%, #f00 100%);
}

.bw {
  width: 11px;
  background: linear-gradient(#fff 50%, #000 50%);
}

.swatch-body {
  height: 46px;
  display: flex;
}

.swatches {
  flex: 1;
  display: grid;
  grid-template-columns: repeat(12, 1fr);
  grid-auto-rows: 1fr;
  gap: 1px;
  padding: 1px 1px 1px 0;
  background: #111;
}

.cut { background-image: linear-gradient(135deg, transparent 65%, #fff 65%); }
.sw-none { background: linear-gradient(135deg, #fff 43%, #d01030 43% 57%, #fff 57%); }
.sw-reg { background: radial-gradient(circle, #111 1px, #fff 1px 3px, #111 3px 4px, #fff 4px); }
.sw-picked { background: #b3b3b3; border: 1px solid #eee; }
.sw-g-lin { background: linear-gradient(90deg, #fff, #111); }
.sw-g-rad { background: radial-gradient(#fff, #222); }
.sw-g-steel { background: linear-gradient(90deg, #666, #fff 40%, #777 60%, #ddd); }
.sw-g-rain { background: linear-gradient(90deg, #f40, #fe0, #0c3, #08f); }
.sw-p-blue { background: conic-gradient(#113 25%, #44c 0 50%, #c9a050 0 60%, #225 0) 0 0 / 4px 4px; }
.sw-p-sand { background: conic-gradient(#e8b060 25%, #fff 0 50%, #c07830 0 75%, #ffe0a0 0) 0 0 / 4px 4px; }

.swatch-foot {
  padding: 0 12px 0 3px;
  justify-content: space-between;
}

.swatch-foot button {
  width: 18px;
}

.stroke-body {
  height: 83px;
  padding: 2px 3px 0 2px;
}

.s-row {
  height: 16px;
  display: flex;
  align-items: center;
}

.s-row.off {
  color: var(--dim);
}

.s-row > label,
.s-row > .lab {
  width: 40px;
  margin-right: 2px;
  text-align: right;
  white-space: nowrap;
}

.s-row .spin {
  height: 12px;
}

.s-row > select,
.s-row > input {
  width: 46px;
  height: 12px;
  border: 1px solid var(--field);
  border-left: 0;
}

.s-row > input {
  width: 36px;
  border-color: #b4bcc0;
  margin-right: 3px;
}

.s-row.off .spin {
  border-color: #b4bcc0;
}

.caps {
  display: flex;
  gap: 1px;
  margin-left: auto;
  padding: 1px;
  border: 1px solid #d4d1c0;
}

.caps svg {
  width: 11px;
  height: 11px;
}

.caps .active {
  background: #d4d1c0;
  outline: 1px solid #aaa;
}

.near {
  margin-left: 2px;
}

.dashed {
  height: 11px;
  display: flex;
  align-items: center;
  gap: 2px;
}

.dashed input {
  appearance: none;
  width: 9px;
  height: 9px;
  border: 1px solid #1c5180;
  background: #4cb848;
  box-shadow: inset 0 0 0 1px #fff;
}

.dashed hr {
  flex: 1;
  margin: 0;
  border: 0;
  border-top: 1px solid #aaa796;
}

.dashes {
  display: flex;
  gap: 3px;
  padding-top: 1px;
}

.dashes label {
  flex: 1;
  min-width: 0;
  color: var(--dim);
  text-align: center;
}

.dashes input {
  display: block;
  width: 100%;
  height: 13px;
  border: 1px solid #b4bcc0;
}

.appear-body {
  height: 141px;
  display: flex;
}

.appear-list {
  flex: 1;
}

.ap-row {
  height: 14px;
  display: flex;
  align-items: center;
  padding-left: 15px;
  border-bottom: 1px solid #d0cdbc;
}

.ap-row.head,
.ap-row.last {
  border-color: #444;
}

.ap-row.head {
  height: 16px;
  padding: 0;
  gap: 3px;
}

.ap-name {
  width: 30px;
}

.ap-chip {
  width: 10px;
  height: 10px;
  border: 1px solid #222;
  background: #b3b3b3;
}

.big {
  width: 12px;
  height: 12px;
}

.appear-foot {
  padding: 0 10px 0 20px;
  justify-content: space-between;
}

.appear-foot .active {
  width: 20px;
}

.layers-body {
  height: 57px;
  display: flex;
}

.layers {
  flex: 1;
  padding-top: 1px;
  background: var(--face);
}

.layer {
  height: 14px;
  display: flex;
  align-items: center;
}

.eye {
  width: 9px;
  height: 8px;
  margin: 0 4px 0 3px;
}

.layer i {
  width: 10px;
  height: 12px;
  margin-right: 4px;
  border: 1px solid #d0cdbc;
  border-right-color: #fff;
}

.l-main {
  flex: 1;
  align-self: stretch;
  display: flex;
  align-items: center;
  gap: 3px;
  padding: 0 1px 0 24px;
  background: #fff;
  border-left: 1px solid #333;
  border-bottom: 1px solid #aaa;
}

.top .l-main {
  padding-left: 3px;
  color: #fff;
  font-weight: bold;
  background: linear-gradient(90deg, #fff 12px, #316ac5 12px);
}

.twirl {
  width: 8px;
  height: 5px;
  background: #88a8d8;
  clip-path: polygon(0 0, 100% 0, 50% 100%);
}

.thumbnail {
  width: 12px;
  height: 12px;
  border: 1px solid #222;
  background: #fff;
}

.l-name {
  flex: 1;
}

.ring {
  width: 7px;
  height: 7px;
  border: 1px solid #fff;
  border-radius: 50%;
}

.sel {
  width: 6px;
  height: 6px;
  border: 1px solid #223;
  background: #4f80ff;
}

.top .sel {
  border-color: #fff;
}

.target {
  width: 10px;
  height: 10px;
}

.layer-foot {
  height: 11px;
  padding: 0 14px 0 5px;
  gap: 12px;
}

.layer-foot span {
  flex: 1;
}

/* Character */
.character {
  position: absolute;
  left: 599px;
  top: 583px;
  width: 149px;
}

.char-body {
  padding: 2px 1px;
}

.char-body > select {
  display: block;
  width: 100%;
  height: 14px;
  margin-bottom: 2px;
}

.char-grid {
  display: grid;
  grid-template-columns: 17px 9px 43px 20px 9px 40px;
  row-gap: 2px;
  align-items: center;
  padding: 3px 0 0 2px;
  border-top: 1px solid #bbb8a8;
}

.char-grid select {
  height: 14px;
  border-left: 0;
}

.glyph {
  font: bold 13px/13px "Liberation Serif", serif;
  text-align: center;
}

.glyph small {
  font-size: 8px;
}

.glyph.sans {
  font: 8px/10px "Liberation Sans", sans-serif;
}

.glyph.stack {
  font-size: 6px;
  line-height: 7px;
}

.stack span {
  display: block;
}

.under {
  text-decoration: underline;
}

/* Pathfinder */
.pathfinder {
  position: absolute;
  left: 1px;
  bottom: 0;
  width: 150px;
  border-bottom-width: 1px;
}

.pf-body {
  padding: 1px 3px 0;
}

.pf-row {
  display: flex;
  align-items: center;
  padding-left: 3px;
}

.pf-row button {
  width: 24px;
  height: 16px;
}

.pf-row button:first-child {
  width: 18px;
  margin-right: 3px;
}

.pf-row svg {
  width: 12px;
  height: 12px;
}

.pf-row .expand {
  width: 38px;
  height: 12px;
  margin-left: 7px;
  color: var(--dim);
  border: 1px solid #c9c7ba;
  border-radius: 2px;
  background: #f5f4ea;
}
```
